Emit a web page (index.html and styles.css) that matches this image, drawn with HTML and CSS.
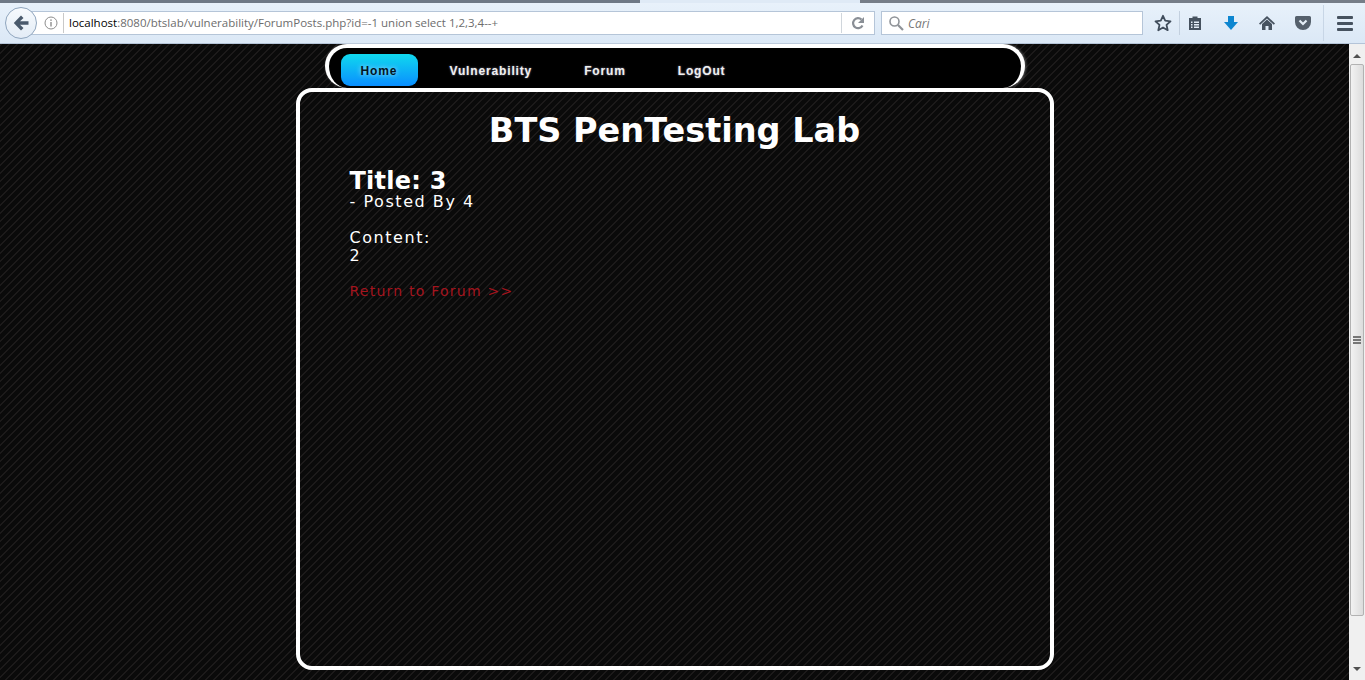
FILE: index.html
```html
<!DOCTYPE html>
<html lang="id">
<head>
<meta charset="utf-8">
<title>BTS PenTesting Lab</title>
<link rel="stylesheet" href="styles.css">
</head>
<body>
<header class="browser">
  <div class="tabstrip"><span class="tab-left"></span><span class="tab-gap"></span><span class="tab-right"></span></div>
  <div class="toolbar">
    <button class="back" aria-label="Back">
      <svg width="18" height="18" viewBox="0 0 18 18"><path d="M9 1.500 1.800 9 9 16.500 11.500 14 8 10.800H16.500V7.200H8L11.500 4Z" fill="#4a5a6c"/></svg>
    </button>
    <div class="urlbar">
      <svg class="info" width="14" height="14" viewBox="0 0 14 14"><circle cx="7" cy="7" r="6" fill="none" stroke="#8d8d8d"/><rect x="6.300" y="6" width="1.400" height="4.500" fill="#8d8d8d"/><rect x="6.300" y="3.400" width="1.400" height="1.500" fill="#8d8d8d"/></svg>
      <span class="url"><b>localhost</b>:8080/btslab/vulnerability/ForumPosts.php?id=-1 union select 1,2,3,4--+</span>
      <span class="reload">
        <svg width="14" height="14" viewBox="0 0 14 14"><path d="M11.500 9.500A5 5 0 1 1 10.500 3.500" fill="none" stroke="#8a8f96" stroke-width="2.200"/><path d="M13 1V7H7Z" fill="#8a8f96"/></svg>
      </span>
    </div>
    <div class="searchbar">
      <svg width="16" height="16" viewBox="0 0 16 16"><circle cx="6.500" cy="6.500" r="4.500" fill="none" stroke="#8f9398" stroke-width="1.600"/><path d="M10 10 15 15" stroke="#8f9398" stroke-width="2.200"/></svg>
      <span>Cari</span>
    </div>
    <div class="tools">
      <span class="tool star"><svg width="18" height="18" viewBox="0 0 18 18"><path d="M9 1.800 11.200 6.700 16.500 7.300 12.500 10.900 13.700 16.200 9 13.500 4.300 16.200 5.500 10.900 1.500 7.300 6.800 6.700Z" fill="none" stroke="#404d5c" stroke-width="1.800" stroke-linejoin="round"/></svg></span>
      <span class="tool"><svg width="16" height="16" viewBox="0 0 16 16"><path d="M2 3H5.500V1.500H10.500V3H14V15H2Z" fill="#46525f"/><path d="M4 6.500H5.500V8H4ZM7 6.500H12V8H7ZM4 9H5.500V10.500H4ZM7 9H12V10.500H7ZM4 11.500H5.500V13H4ZM7 11.500H12V13H7Z" fill="#e4edf7"/></svg></span>
      <span class="tool"><svg width="16" height="16" viewBox="0 0 16 16"><path d="M5 1H11V7H15L8 15 1 7H5Z" fill="#0d86d0"/></svg></span>
      <span class="tool"><svg width="18" height="18" viewBox="0 0 18 18"><path d="M9 2 17 9.500 15.800 10.800 9 4.500 2.200 10.800 1 9.500Z" fill="#46525f"/><path d="M4 10 9 5.500 14 10V16H10.500V12H7.500V16H4Z" fill="#46525f"/></svg></span>
      <span class="tool"><svg width="18" height="16" viewBox="0 0 18 16"><path d="M2.500 1H15.500A1.500 1.500 0 0 1 17 2.500V7A8 8 0 0 1 1 7V2.500A1.500 1.500 0 0 1 2.500 1Z" fill="#55606c"/><path d="M5.500 5.500 9 9 12.500 5.500" fill="none" stroke="#e4edf7" stroke-width="2.200"/></svg></span>
      <span class="tool menu"><i></i><i></i><i></i></span>
    </div>
  </div>
</header>
<div class="viewport">
  <main class="page">
    <nav class="nav">
      <a class="item active" href="#">Home</a>
      <a class="item" href="#">Vulnerability</a>
      <a class="item" href="#">Forum</a>
      <a class="item" href="#">LogOut</a>
    </nav>
    <section class="panel">
      <h1>BTS PenTesting Lab</h1>
      <h2>Title: 3</h2>
      <p class="posted">- Posted By 4</p>
      <p class="content">Content:<br>2</p>
      <a class="return" href="#">Return to Forum &gt;&gt;</a>
    </section>
  </main>
  <aside class="scrollbar">
    <span class="arrow up"></span>
    <span class="thumb"><i></i><i></i><i></i></span>
    <span class="arrow down"></span>
  </aside>
</div>
</body>
</html>
```

FILE: styles.css
```css
* { box-sizing: border-box; }
html, body { margin: 0; height: 100%; overflow: hidden; }
body { display: flex; flex-direction: column; font-family: "DejaVu Sans", Verdana, sans-serif; background: #000; }

.browser { height: 44px; flex: none; display: flex; flex-direction: column; background: linear-gradient(#e9f2fb, #dbe8f6); border-bottom: 1px solid #b4c4d8; }
.tabstrip { height: 3px; display: flex; flex: none; }
.tab-left { width: 640px; background: #6f7986; }
.tab-gap { width: 220px; background: #dfeaf6; }
.tab-right { flex: 1; background: #757d88; }
.toolbar { flex: 1; display: flex; align-items: center; padding-left: 5px; }

.back { position: relative; z-index: 1; width: 32px; height: 32px; flex: none; padding: 0; display: flex; align-items: center; justify-content: center; border-radius: 50%; border: 1px solid #90a6be; background: linear-gradient(#f7fafd, #e3ecf6); }
.urlbar { width: 845px; height: 24px; margin-left: -7px; padding-left: 13px; flex: none; display: flex; align-items: center; background: #fff; border: 1px solid #b5c5d8; font: 11.500px "Open Sans", "Noto Sans", sans-serif; color: #6d6d6d; }
.info { flex: none; }
.url { flex: 1; margin-left: 5px; padding-left: 5px; border-left: 1px solid #c9c9c9; line-height: 20px; white-space: nowrap; }
.url b { font-weight: 400; color: #000; }
.reload { width: 33px; height: 20px; flex: none; display: flex; align-items: center; justify-content: center; border-left: 1px solid #d0d6dc; }
.searchbar { width: 262px; height: 24px; margin-left: 6px; padding-left: 6px; flex: none; display: flex; align-items: center; gap: 4px; background: #fff; border: 1px solid #b5c5d8; font: italic 12px "Open Sans", "Noto Sans", sans-serif; color: #777; }

.tools { flex: 1; display: flex; align-items: center; margin-left: 3px; }
.tool { width: 36px; height: 24px; flex: none; display: flex; align-items: center; justify-content: center; }
.star { width: 33px; margin-left: 1px; margin-right: -3px; border-right: 1px solid #c3d0df; }
.menu { width: 42px; margin-left: 2px; flex-direction: column; gap: 3px; border-left: 1px solid #c8d6e6; height: 36px; }
.menu i { display: block; width: 16px; height: 3px; border-radius: 1px; background: #46525f; }

.viewport { flex: 1; min-height: 0; display: flex; }
.page { flex: 1; display: flex; flex-direction: column; align-items: center; background: linear-gradient(135deg, #1c1a1a 18%, #0a0a0a 18%, #0a0a0a 50%, #1c1a1a 50%, #1c1a1a 68%, #0a0a0a 68%) 0 0 / 8px 8px; }

.nav { width: 700px; height: 44px; flex: none; display: flex; gap: 12px; padding: 6px 0 0 12px; background: #000; border: 4px solid #fff; border-bottom: 0; border-radius: 22px; box-shadow: 1px 0 3px rgba(255,255,255,.35); }
.item { height: 32px; padding: 2px 20px 0; display: flex; align-items: center; font: bold 12px "Liberation Sans", Arial, sans-serif; letter-spacing: .85px; color: #f0f0f0; text-decoration: none; text-shadow: 0 0 2px rgba(190,190,220,.7); }
.active { width: 77px; border-radius: 9px; background: linear-gradient(#10d9ee, #0a8eff); color: #04141f; text-shadow: 0 0 5px #b4e6ff; }

.panel { width: 758px; height: 582px; flex: none; padding: 0 50px; border: 4px solid #fff; border-radius: 16px; color: #fff; }
h1 { margin: 19px 0 0; font-size: 33.500px; line-height: 40px; font-weight: 700; text-align: center; }
h2 { margin: 19px 0 0; font-size: 24px; line-height: 23px; font-weight: 700; letter-spacing: .25px; }
p { margin: 0; font-size: 16px; line-height: 18px; letter-spacing: 1.550px; }
.content { margin-top: 18px; }
.return { display: block; margin-top: 17px; font-size: 14px; line-height: 18px; letter-spacing: 1.230px; color: #a5141e; text-decoration: none; }

.scrollbar { width: 16px; flex: none; display: flex; flex-direction: column; align-items: center; background: #f0f0f0; }
.arrow { flex: none; width: 0; height: 0; border-left: 4px solid transparent; border-right: 4px solid transparent; }
.up { margin-top: 10px; border-bottom: 4px solid #505050; }
.down { margin-top: 51px; border-top: 4px solid #505050; }
.thumb { width: 14px; height: 552px; margin-top: 6px; flex: none; display: flex; flex-direction: column; justify-content: center; align-items: center; gap: 1px; background: linear-gradient(90deg, #f2f2f2, #dcdcdc); border: 1px solid #b2b2b2; border-radius: 2px; }
.thumb i { display: block; width: 8px; height: 2px; background: #777; }
```
